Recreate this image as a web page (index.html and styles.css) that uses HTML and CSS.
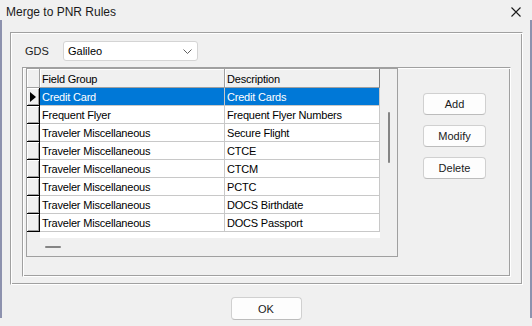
FILE: index.html
```html
<!DOCTYPE html>
<html>

<head>
    <meta charset="UTF-8">
    <meta name="viewport" content="width=device-width, initial-scale=1.0">
    <link rel="stylesheet" href="styles.css">
</head>

<body>
    <div class="window">
        <div class="titlebar">
            <span class="title">Merge to PNR Rules</span>
            <svg class="close" width="10" height="10" viewBox="0 0 10 10">
                <path d="M0.5 0.5 L9.5 9.5 M9.5 0.5 L0.5 9.5" stroke="#1a1a1a" stroke-width="1.1" fill="none"/>
            </svg>
        </div>

        <div class="frame outer">
            <div class="gds-row">
                <label for="gds">GDS</label>
                <div class="select" id="gds">
                    <span>Galileo</span>
                    <svg width="9" height="5" viewBox="0 0 9 5">
                        <path d="M0.5 0.5 L4.5 4.5 L8.5 0.5" stroke="#606060" stroke-width="1" fill="none"/>
                    </svg>
                </div>
            </div>

            <div class="frame inner">
                <div class="grid">
                    <div class="grid-main">
                        <div class="cells">
                            <div class="row head">
                                <div class="corner"></div>
                                <div class="hcell">Field Group</div>
                                <div class="hcell">Description</div>
                            </div>
                            <div class="row selected">
                                <div class="rowhead">
                                    <svg width="6" height="10" viewBox="0 0 6 10"><polygon points="0,0 6,5 0,10" fill="#000"/></svg>
                                </div>
                                <div class="cell">Credit Card</div>
                                <div class="cell">Credit Cards</div>
                            </div>
                            <div class="row">
                                <div class="rowhead"></div>
                                <div class="cell">Frequent Flyer</div>
                                <div class="cell">Frequent Flyer Numbers</div>
                            </div>
                            <div class="row">
                                <div class="rowhead"></div>
                                <div class="cell">Traveler Miscellaneous</div>
                                <div class="cell">Secure Flight</div>
                            </div>
                            <div class="row">
                                <div class="rowhead"></div>
                                <div class="cell">Traveler Miscellaneous</div>
                                <div class="cell">CTCE</div>
                            </div>
                            <div class="row">
                                <div class="rowhead"></div>
                                <div class="cell">Traveler Miscellaneous</div>
                                <div class="cell">CTCM</div>
                            </div>
                            <div class="row">
                                <div class="rowhead"></div>
                                <div class="cell">Traveler Miscellaneous</div>
                                <div class="cell">PCTC</div>
                            </div>
                            <div class="row">
                                <div class="rowhead"></div>
                                <div class="cell">Traveler Miscellaneous</div>
                                <div class="cell">DOCS Birthdate</div>
                            </div>
                            <div class="row">
                                <div class="rowhead"></div>
                                <div class="cell">Traveler Miscellaneous</div>
                                <div class="cell">DOCS Passport</div>
                            </div>
                            <div class="filler"></div>
                        </div>
                        <div class="vscroll">
                            <div class="vthumb"></div>
                        </div>
                    </div>
                    <div class="hscroll">
                        <div class="hthumb"></div>
                    </div>
                </div>

                <div class="actions">
                    <button>Add</button>
                    <button>Modify</button>
                    <button>Delete</button>
                </div>
            </div>
        </div>

        <div class="footer">
            <button class="ok">OK</button>
        </div>
    </div>
</body>

</html>
```

FILE: styles.css
```css
body {
    margin: 0;
    padding: 0;
    background-color: #f0f0f0;
    font-family: "Liberation Sans", Arial, sans-serif;
    font-size: 11px;
    color: #000;
}

.window {
    position: relative;
    width: 532px;
    height: 326px;
    overflow: hidden;
    background-color: #f0f0f0;
}

/* edges of the window behind */
.window::before,
.window::after {
    content: "";
    position: absolute;
    top: 20px;
    bottom: 8px;
    width: 2px;
    background-color: #8d92ae;
}

.window::before {
    left: 0;
}

.window::after {
    right: 0;
}

.titlebar {
    height: 24px;
    display: flex;
    align-items: center;
    justify-content: space-between;
    padding: 0 11px 0 6px;
}

.title {
    font-size: 12px;
    color: #1a1a1a;
}

.close {
    display: block;
}

/* etched group frames */
.frame {
    box-sizing: border-box;
    border: 1px solid;
    border-color: #a0a0a0 #fff #fff #a0a0a0;
    box-shadow: inset 1px 1px #fff, inset -1px -1px #a0a0a0;
}

.outer {
    width: 513px;
    height: 253px;
    margin: 8px 0 0 10px;
}

.gds-row {
    display: flex;
    align-items: center;
    margin: 8px 0 0 14px;
}

.gds-row label {
    width: 38px;
    color: #1a1a1a;
}

.select {
    box-sizing: border-box;
    width: 135px;
    height: 20px;
    display: flex;
    align-items: center;
    justify-content: space-between;
    padding: 0 5px 0 4px;
    background-color: #fff;
    border: 1px solid #d4d4d4;
    border-radius: 3px;
}

.select svg {
    display: block;
}

.inner {
    display: flex;
    align-items: flex-start;
    width: 489px;
    height: 210px;
    margin: 6px 0 0 11px;
    padding: 0 0 0 3px;
}

/* data grid */
.grid {
    box-sizing: border-box;
    width: 372px;
    height: 189px;
    border: 1px solid #a0a0a0;
    background-color: #f0f0f0;
    letter-spacing: -0.2px;
}

.grid-main {
    display: flex;
}

.cells {
    width: 353px;
}

.row {
    display: grid;
    grid-template-columns: 13px 185px 155px;
    height: 18px;
}

.row.head {
    height: 19px;
}

.corner,
.hcell {
    box-sizing: border-box;
    background-color: #f0f0f0;
    border-right: 1px solid #a0a0a0;
    border-bottom: 1px solid #a0a0a0;
    box-shadow: inset 1px 1px #fff;
}

.hcell {
    padding: 4px 0 0 2px;
    white-space: nowrap;
}

.hcell:last-child {
    border-right-color: #808080;
}

.rowhead {
    box-sizing: border-box;
    display: flex;
    align-items: center;
    padding-left: 3px;
    background-color: #f0f0f0;
    border-right: 1px solid #000;
    border-bottom: 1px solid #000;
    box-shadow: inset 1px 1px #fff, inset -1px -1px #a0a0a0;
}

.rowhead svg {
    display: block;
}

.cell {
    box-sizing: border-box;
    padding: 3px 0 0 2px;
    background-color: #fff;
    border-right: 1px solid #c8c8c8;
    border-bottom: 1px solid #c8c8c8;
    white-space: nowrap;
    overflow: hidden;
}

.selected .cell {
    background-color: #0078d7;
    color: #fff;
}

.filler {
    height: 6px;
    margin-left: 13px;
    background-color: #fff;
}

.vscroll {
    width: 17px;
    height: 169px;
    position: relative;
}

.vthumb {
    position: absolute;
    left: 8px;
    top: 43px;
    width: 2px;
    height: 51px;
    border-radius: 1px;
    background-color: #858585;
}

.hscroll {
    height: 18px;
    position: relative;
}

.hthumb {
    position: absolute;
    left: 18px;
    top: 8px;
    width: 16px;
    height: 2px;
    border-radius: 1px;
    background-color: #858585;
}

/* buttons */
button {
    box-sizing: border-box;
    font-family: "Liberation Sans", Arial, sans-serif;
    font-size: 11px;
    color: #1a1a1a;
    background-color: #fdfdfd;
    border: 1px solid #d0d0d0;
    border-bottom-color: #bcbcbc;
    border-radius: 4px;
    padding: 0;
}

.actions {
    display: flex;
    flex-direction: column;
    gap: 10px;
    margin: 25px 0 0 25px;
}

.actions button {
    width: 63px;
    height: 22px;
}

.footer {
    display: flex;
    justify-content: center;
    margin-top: 12px;
}

.ok {
    width: 71px;
    height: 23px;
}
```
